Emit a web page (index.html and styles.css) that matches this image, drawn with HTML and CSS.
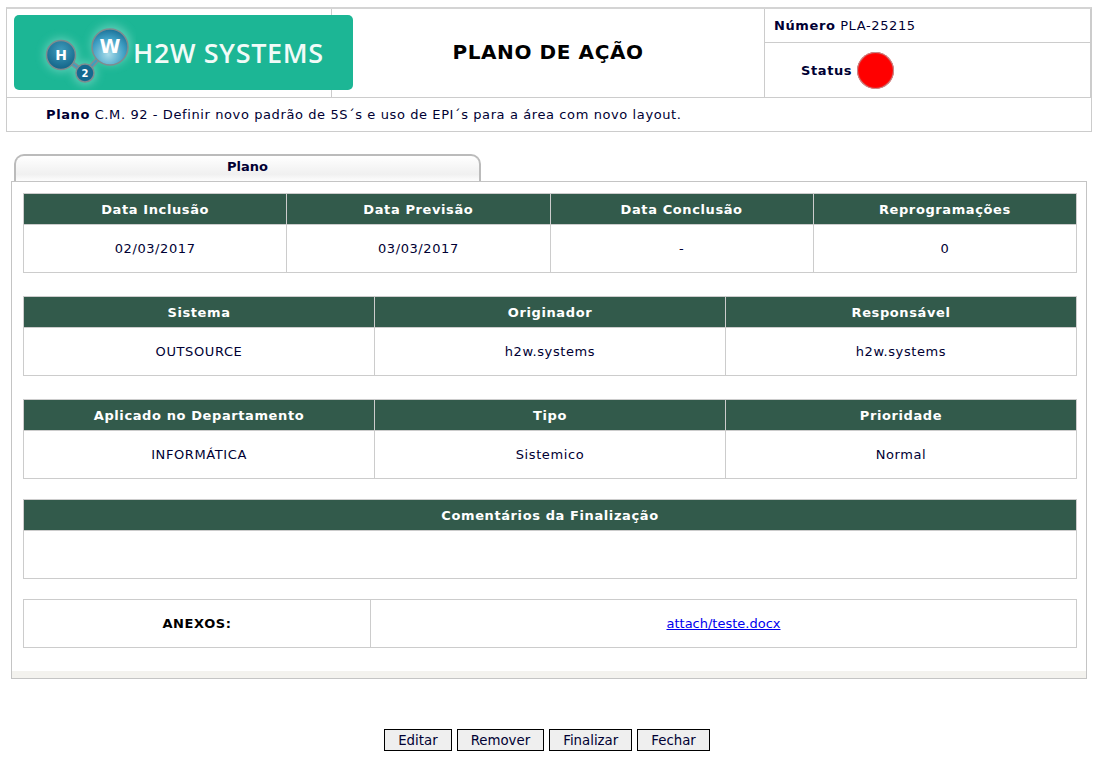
FILE: index.html
```html
<!DOCTYPE html>
<html lang="pt-BR">
<head>
    <meta charset="UTF-8">
    <meta name="viewport" content="width=device-width, initial-scale=1.0">
    <title>Plano de Ação</title>
    <link rel="stylesheet" href="styles.css">
</head>
<body>
    <div class="page-head">
        <div class="head-top">
            <div class="logo-cell">
                <div class="logo">
                    <svg class="logo-mark" viewBox="0 0 110 75" width="110" height="75">
                        <defs>
                            <radialGradient id="ballH" cx="50%" cy="35%" r="70%">
                                <stop offset="0%" stop-color="#3f9dbd"/>
                                <stop offset="100%" stop-color="#0f5f84"/>
                            </radialGradient>
                            <radialGradient id="ballW" cx="45%" cy="70%" r="75%">
                                <stop offset="0%" stop-color="#a8dcea"/>
                                <stop offset="60%" stop-color="#3f9fc4"/>
                                <stop offset="100%" stop-color="#14688f"/>
                            </radialGradient>
                            <filter id="glow" x="-30%" y="-30%" width="160%" height="160%">
                                <feGaussianBlur stdDeviation="4"/>
                            </filter>
                        </defs>
                        <g fill="#8fe0d2" opacity=".55" filter="url(#glow)">
                            <circle cx="35" cy="40" r="17"/>
                            <circle cx="85" cy="30" r="20"/>
                            <circle cx="59" cy="58" r="12"/>
                        </g>
                        <path d="M35 40 L59 58 L85 30" fill="none" stroke="#7d8f96" stroke-width="5"/>
                        <path d="M35 40 L59 58 L85 30" fill="none" stroke="#3f9dbd" stroke-width="2"/>
                        <circle cx="35" cy="40" r="14.5" fill="url(#ballH)" stroke="#7f8b8f" stroke-width="1.5"/>
                        <circle cx="59" cy="58" r="9" fill="#14688f" stroke="#7f8b8f" stroke-width="1.5"/>
                        <circle cx="84" cy="32" r="18" fill="url(#ballW)" stroke="#7f8b8f" stroke-width="1.5"/>
                        <text x="35" y="45" class="mark-h">H</text>
                        <text x="59" y="62" class="mark-2">2</text>
                        <text x="84" y="38" class="mark-w">W</text>
                    </svg>
                    <span class="logo-name">H2W SYSTEMS</span>
                </div>
            </div>
            <div class="title-cell"><h1>PLANO DE AÇÃO</h1></div>
            <div class="info-cell">
                <div class="info-number"><b>Número</b> PLA-25215</div>
                <div class="info-status"><b>Status</b> <span class="status-dot"></span></div>
            </div>
        </div>
        <div class="head-plan"><b>Plano</b> C.M. 92 - Definir novo padrão de 5S´s e uso de EPI´s para a área com novo layout.</div>
    </div>

    <div class="tab">Plano</div>
    <div class="panel">
        <div class="panel-body">
            <table class="grid cols-4">
                <tr><th>Data Inclusão</th><th>Data Previsão</th><th>Data Conclusão</th><th>Reprogramações</th></tr>
                <tr><td>02/03/2017</td><td>03/03/2017</td><td>-</td><td>0</td></tr>
            </table>
            <table class="grid cols-3">
                <tr><th>Sistema</th><th>Originador</th><th>Responsável</th></tr>
                <tr><td>OUTSOURCE</td><td>h2w.systems</td><td>h2w.systems</td></tr>
            </table>
            <table class="grid cols-3">
                <tr><th>Aplicado no Departamento</th><th>Tipo</th><th>Prioridade</th></tr>
                <tr><td>INFORMÁTICA</td><td>Sistemico</td><td>Normal</td></tr>
            </table>
            <table class="grid comments">
                <tr><th>Comentários da Finalização</th></tr>
                <tr><td></td></tr>
            </table>
            <table class="grid attachments">
                <tr>
                    <td class="attach-label">ANEXOS:</td>
                    <td><a href="#">attach/teste.docx</a></td>
                </tr>
            </table>
        </div>
        <div class="panel-foot"></div>
    </div>

    <div class="actions">
        <button>Editar</button>
        <button>Remover</button>
        <button>Finalizar</button>
        <button>Fechar</button>
    </div>
</body>
</html>
```

FILE: styles.css
```css
* {
    margin: 0;
    padding: 0;
    box-sizing: border-box;
}

body {
    font-family: "DejaVu Sans", Verdana, sans-serif;
    font-size: 13px;
    letter-spacing: 0.6px;
    color: #000033;
    background: white;
    padding: 7px 1px 0 6px;
    height: 757px;
    overflow: hidden;
}

/* header */
.page-head {
    border: 1px solid #ccc;
    border-top: 2px solid #d4d4d4;
    width: 1086px;
}

.head-top {
    display: flex;
    height: 89px;
    border-bottom: 1px solid #ccc;
}

.logo-cell {
    width: 325px;
    border-right: 1px solid #ccc;
    padding: 6px 0 0 7px;
}

.logo {
    position: relative;
    width: 339px;
    height: 75px;
    background: #1cb695;
    border-radius: 5px;
    display: flex;
    align-items: center;
}

.logo-mark {
    flex: none;
    margin-left: 12px;
    margin-right: -3px;
}

.mark-h, .mark-2, .mark-w {
    fill: white;
    font-family: "DejaVu Sans", sans-serif;
    font-weight: bold;
    text-anchor: middle;
    letter-spacing: 0;
}

.mark-h { font-size: 14px; }
.mark-2 { font-size: 10px; }
.mark-w { font-size: 19px; }

.logo-name {
    font-family: "Open Sans", sans-serif;
    font-size: 27px;
    font-weight: 600;
    letter-spacing: 0.6px;
    color: #f1fbf8;
    white-space: nowrap;
}

.title-cell {
    width: 433px;
    border-right: 1px solid #ccc;
    display: flex;
    align-items: center;
    justify-content: center;
}

h1 {
    font-size: 20px;
    font-weight: bold;
    letter-spacing: 0.6px;
    color: black;
    padding-bottom: 2px;
}

.info-cell {
    flex: 1;
    display: flex;
    flex-direction: column;
    border-right: 1px solid #ccc;
}

.info-number {
    height: 34px;
    padding: 9px 0 0 9px;
    border-bottom: 1px solid #ccc;
}

.info-status {
    flex: 1;
    display: flex;
    align-items: center;
    gap: 5px;
    padding-left: 36px;
}

.status-dot {
    width: 37px;
    height: 37px;
    border-radius: 50%;
    background: #ff0000;
    box-shadow: inset 0 0 1px 1px #b9a0a0;
}

.head-plan {
    height: 33px;
    padding: 9px 0 0 39px;
}

/* tab and panel */
.tab {
    width: 467px;
    height: 28px;
    margin: 22px 0 -1px 8px;
    padding-top: 3px;
    text-align: center;
    font-weight: bold;
    letter-spacing: 0;
    border: 2px solid #bbb;
    border-bottom: none;
    border-radius: 10px 10px 0 0;
    background: linear-gradient(#ffffff, #f0f0f0 70%, #ffffff);
    position: relative;
}

.panel {
    position: relative;
    width: 1076px;
    height: 498px;
    margin-left: 5px;
    border: 1px solid #c4c4c4;
    background: white;
    display: flex;
    flex-direction: column;
}

.panel-body {
    flex: 1;
    padding: 11px 9px 0 11px;
}

.panel-foot {
    height: 23px;
    background: #f3f2ee;
}

/* data tables */
.grid {
    width: 1054px;
    border-collapse: collapse;
    table-layout: fixed;
    text-align: center;
    margin-bottom: 23px;
}

.grid th, .grid td {
    border: 1px solid #ccc;
}

.grid th {
    height: 31px;
    background: #325a4b;
    color: white;
    font-size: 13px;
    font-weight: bold;
}

.grid td {
    height: 48px;
}

.grid.comments {
    margin-top: -3px;
    margin-bottom: 20px;
}

.attach-label {
    width: 347px;
    font-weight: bold;
    color: black;
}

.attachments a {
    color: #0000ee;
    letter-spacing: 0;
}

/* buttons */
.actions {
    display: flex;
    justify-content: center;
    gap: 5px;
    margin-top: 50px;
    padding-right: 4px;
}

.actions button {
    height: 22px;
    padding: 0 13px;
    font-family: "DejaVu Sans", Verdana, sans-serif;
    font-size: 13.33px;
    letter-spacing: 0;
    color: #000033;
    background: #efefef;
    border: 1px solid black;
}
```
